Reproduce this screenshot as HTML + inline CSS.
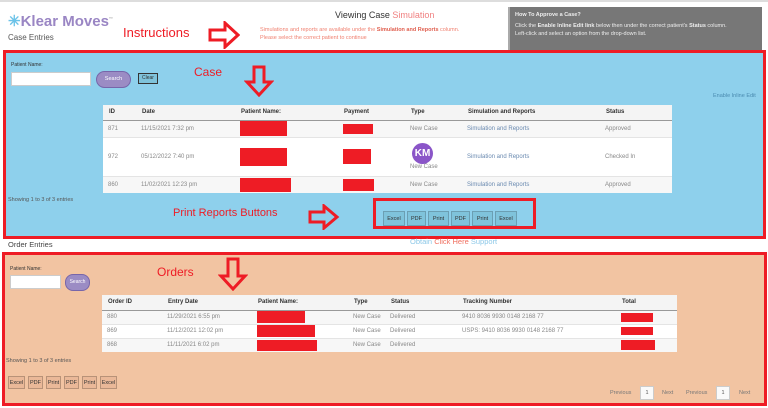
<!DOCTYPE html>
<html><head><meta charset="utf-8"><style>
*{margin:0;padding:0;box-sizing:border-box}
body{width:768px;height:408px;position:relative;background:#fff;font-family:"Liberation Sans",sans-serif;overflow:hidden;color:#555}
.a{position:absolute;white-space:nowrap}
.red{background:#ee1c25}
table{border-collapse:collapse;position:absolute;background:#fff;font-size:6px;color:#888;table-layout:fixed}
th{font-weight:bold;color:#333;text-align:left;background:#f4f4f4;border-bottom:1.5px solid #999;padding-left:6px}
td{padding-left:5px;border-top:1px solid #e4e4e4;overflow:hidden}
.btn{display:inline-block;font-size:5.5px;color:#333;text-align:center;border:1px solid #6b9fb3;background:#7fc3db;margin-right:2px;padding-top:4px;height:15px}
.ob{display:inline-block;font-size:5.5px;color:#333;text-align:center;border:1px solid #b89278;background:#eab898;margin-right:3px;padding-top:3px;height:13px}
</style></head><body>
<div class="a" style="left:0;top:0;width:768px;height:2px;background:#ddd"></div>
<div class="a" style="left:8px;top:12px;font-size:15px;font-weight:bold;color:#9a86c4"><span style="color:#6cc3e8">✳</span>Klear Moves<sup style="font-size:4px;color:#999">™</sup></div>
<div class="a" style="left:8px;top:33px;font-size:8px;color:#555">Case Entries</div>
<div class="a" style="left:123px;top:25px;font-size:13px;color:#ee1c25">Instructions</div>
<svg class="a" style="left:208px;top:21px" width="32" height="28"><polygon points="2,9 17,9 17,2 30,14 17,26 17,19 2,19" fill="#fff" stroke="#ee1c25" stroke-width="3"/></svg>
<div class="a" style="left:335px;top:10px;font-size:9px;color:#333">Viewing Case <span style="color:#f08080">Simulation</span></div>
<div class="a" style="left:260px;top:26px;font-size:5.5px;color:#f08070;line-height:8px">Simulations and reports are available under the <b style="color:#e06050">Simulation and Reports</b> column.<br>Please select the correct patient to continue</div>
<div class="a" style="left:508px;top:7px;width:254px;height:44px;background:#777;border-left:2px solid #aaa;color:#eee;font-size:5.5px;padding:4px 5px;line-height:8px"><b>How To Approve a Case?</b><br><div style="margin-top:3px">Click the <b>Enable Inline Edit link</b> below then under the correct patient's <b>Status</b> column.<br>Left-click and select an option from the drop-down list.</div></div>

<div class="a" style="left:3px;top:50px;width:763px;height:189px;border:3px solid #ee1c25;background:#8ed0ec"></div>
<div class="a" style="left:11px;top:62px;font-size:5px;color:#333">Patient Name:</div>
<div class="a" style="left:11px;top:72px;width:80px;height:14px;background:#fff;border:1px solid #ccc"></div>
<div class="a" style="left:96px;top:71px;width:35px;height:17px;background:#9b8cc4;border:1px solid #7766aa;border-radius:9px;color:#fff;font-size:5.5px;text-align:center;line-height:15px">Search</div>
<div class="a" style="left:138px;top:73px;width:20px;height:11px;border:1px solid #333;background:#7fc3db;font-size:5px;text-align:center;line-height:9px;color:#333">Clear</div>
<div class="a" style="left:194px;top:65px;font-size:12px;color:#ee1c25">Case</div>
<svg class="a" style="left:244px;top:65px" width="30" height="32"><polygon points="10,2 20,2 20,17 27,17 15,30 3,17 10,17" fill="#8ed0ec" stroke="#ee1c25" stroke-width="3"/></svg>
<div class="a" style="left:713px;top:93px;font-size:5.5px;color:#4a8bb0">Enable Inline Edit</div>
<table style="left:103px;top:105px;width:569px">
<colgroup><col style="width:33px"><col style="width:99px"><col style="width:103px"><col style="width:67px"><col style="width:57px"><col style="width:138px"><col></colgroup>
<tr style="height:15px"><th>ID</th><th>Date</th><th>Patient Name:</th><th>Payment</th><th>Type</th><th>Simulation and Reports</th><th>Status</th></tr>
<tr style="height:17px;background:#f7f7f7"><td>871</td><td>11/15/2021 7:32 pm</td><td><div class="red" style="width:47px;height:15px"></div></td><td><div class="red" style="width:30px;height:10px"></div></td><td>New Case</td><td style="color:#6a8ab0">Simulation and Reports</td><td>Approved</td></tr>
<tr style="height:39px"><td>972</td><td>05/12/2022 7:40 pm</td><td><div class="red" style="width:47px;height:18px"></div></td><td><div class="red" style="width:28px;height:15px"></div></td><td><div style="width:21px;height:21px;border-radius:50%;background:#8a55c8;color:#fff;font-weight:bold;font-size:10px;text-align:center;line-height:21px;margin-left:2px">KM</div>New Case</td><td style="color:#6a8ab0">Simulation and Reports</td><td>Checked In</td></tr>
<tr style="height:17px;background:#f7f7f7"><td>860</td><td>11/02/2021 12:23 pm</td><td><div class="red" style="width:51px;height:14px"></div></td><td><div class="red" style="width:31px;height:12px"></div></td><td>New Case</td><td style="color:#6a8ab0">Simulation and Reports</td><td>Approved</td></tr>
</table>
<div class="a" style="left:8px;top:197px;font-size:5.5px;color:#555">Showing 1 to 3 of 3 entries</div>
<div class="a" style="left:173px;top:207px;font-size:11px;color:#ee1c25">Print Reports Buttons</div>
<svg class="a" style="left:308px;top:204px" width="32" height="26"><polygon points="2,8 16,8 16,2 29,13 16,24 16,18 2,18" fill="#8ed0ec" stroke="#ee1c25" stroke-width="3"/></svg>
<div class="a" style="left:373px;top:198px;width:163px;height:31px;border:3px solid #ee1c25;padding:6px 0 0 7px"><span class="btn" style="width:22px">Excel</span><span class="btn" style="width:19px">PDF</span><span class="btn" style="width:21px">Print</span><span class="btn" style="width:19px">PDF</span><span class="btn" style="width:21px">Print</span><span class="btn" style="width:22px">Excel</span></div>
<div class="a" style="left:410px;top:237px;font-size:7.5px;color:#8cc8e8">Obtain <span style="color:#f07060">Click Here</span> Support</div>
<div class="a" style="left:8px;top:240px;font-size:7.5px;color:#444">Order Entries</div>

<div class="a" style="left:2px;top:252px;width:765px;height:154px;border:3px solid #ee1c25;background:#f2c4a2"></div>
<div class="a" style="left:10px;top:266px;font-size:5px;color:#333">Patient Name:</div>
<div class="a" style="left:10px;top:275px;width:51px;height:14px;background:#fff;border:1px solid #ccc"></div>
<div class="a" style="left:65px;top:274px;width:25px;height:17px;background:#9b8cc4;border:1px solid #7766aa;border-radius:8px;color:#fff;font-size:5px;text-align:center;line-height:15px">Search</div>
<div class="a" style="left:157px;top:265px;font-size:12px;color:#ee1c25">Orders</div>
<svg class="a" style="left:218px;top:257px" width="30" height="34"><polygon points="10,2 20,2 20,19 27,19 15,32 3,19 10,19" fill="#f2c4a2" stroke="#ee1c25" stroke-width="3"/></svg>
<table style="left:102px;top:295px;width:575px">
<colgroup><col style="width:60px"><col style="width:90px"><col style="width:96px"><col style="width:37px"><col style="width:72px"><col style="width:159px"><col></colgroup>
<tr style="height:15px"><th>Order ID</th><th>Entry Date</th><th>Patient Name:</th><th>Type</th><th>Status</th><th>Tracking Number</th><th>Total</th></tr>
<tr style="height:14px;background:#f7f7f7"><td>880</td><td>11/29/2021 6:55 pm</td><td><div class="red" style="width:48px;height:12px"></div></td><td>New Case</td><td>Delivered</td><td>9410 8036 9930 0148 2168 77</td><td><div class="red" style="width:32px;height:9px"></div></td></tr>
<tr style="height:14px"><td>869</td><td>11/12/2021 12:02 pm</td><td><div class="red" style="width:58px;height:12px"></div></td><td>New Case</td><td>Delivered</td><td>USPS: 9410 8036 9930 0148 2168 77</td><td><div class="red" style="width:32px;height:8px"></div></td></tr>
<tr style="height:14px;background:#f7f7f7"><td>868</td><td>11/11/2021 6:02 pm</td><td><div class="red" style="width:60px;height:11px"></div></td><td>New Case</td><td>Delivered</td><td></td><td><div class="red" style="width:34px;height:10px"></div></td></tr>
</table>
<div class="a" style="left:6px;top:358px;font-size:5.5px;color:#555">Showing 1 to 3 of 3 entries</div>
<div class="a" style="left:8px;top:371px"><span class="ob" style="width:17px">Excel</span><span class="ob" style="width:15px">PDF</span><span class="ob" style="width:15px">Print</span><span class="ob" style="width:15px">PDF</span><span class="ob" style="width:15px">Print</span><span class="ob" style="width:17px">Excel</span></div>
<div class="a" style="left:610px;top:390px;font-size:5.5px;color:#777">Previous</div>
<div class="a" style="left:640px;top:386px;width:14px;height:14px;background:#fafafa;border:1px solid #ccc;font-size:5.5px;text-align:center;line-height:12px">1</div>
<div class="a" style="left:662px;top:390px;font-size:5.5px;color:#777">Next</div>
<div class="a" style="left:686px;top:390px;font-size:5.5px;color:#777">Previous</div>
<div class="a" style="left:716px;top:386px;width:14px;height:14px;background:#fafafa;border:1px solid #ccc;font-size:5.5px;text-align:center;line-height:12px">1</div>
<div class="a" style="left:739px;top:390px;font-size:5.5px;color:#777">Next</div>
</body></html>
